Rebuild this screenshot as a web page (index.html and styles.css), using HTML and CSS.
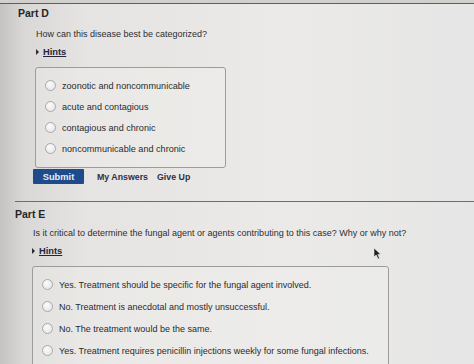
FILE: index.html
```html
<!DOCTYPE html>
<html>
<head>
<meta charset="utf-8">
<link rel="stylesheet" href="styles.css">
</head>
<body>
<div class="page">
  <div class="topline"></div>
  <section class="part part-d">
    <h2 class="part-title">Part D</h2>
    <p class="question">How can this disease best be categorized?</p>
    <div class="hints"><span class="tri"></span><a class="hints-link">Hints</a></div>
    <div class="choices">
      <label class="choice"><span class="radio"></span>zoonotic and noncommunicable</label>
      <label class="choice"><span class="radio"></span>acute and contagious</label>
      <label class="choice"><span class="radio"></span>contagious and chronic</label>
      <label class="choice"><span class="radio"></span>noncommunicable and chronic</label>
    </div>
    <div class="actions">
      <button class="submit">Submit</button>
      <a class="action-link">My Answers</a>
      <a class="action-link">Give Up</a>
    </div>
  </section>
  <section class="part part-e">
    <h2 class="part-title">Part E</h2>
    <p class="question">Is it critical to determine the fungal agent or agents contributing to this case? Why or why not?</p>
    <div class="hints"><span class="tri"></span><a class="hints-link">Hints</a></div>
    <div class="choices">
      <label class="choice"><span class="radio"></span>Yes. Treatment should be specific for the fungal agent involved.</label>
      <label class="choice"><span class="radio"></span>No. Treatment is anecdotal and mostly unsuccessful.</label>
      <label class="choice"><span class="radio"></span>No. The treatment would be the same.</label>
      <label class="choice"><span class="radio"></span>Yes. Treatment requires penicillin injections weekly for some fungal infections.</label>
    </div>
  </section>
  <svg class="cursor" width="9" height="13" viewBox="0 0 9 13"><path d="M1 1 L1 10 L3.2 8 L5 12 L6.5 11.3 L4.8 7.5 L7.8 7.5 Z" fill="#222" stroke="#eee" stroke-width="0.6"/></svg>
</div>
</body>
</html>
```
FILE: styles.css
```css
html, body {
  margin: 0;
  padding: 0;
}
body {
  width: 474px;
  height: 364px;
  overflow: hidden;
  font-family: "Liberation Sans", Arial, sans-serif;
  color: #2e2e30;
  background: linear-gradient(90deg, #c4c3c1 0%, #d9d8d6 5%, #e6e4e2 18%, #ebeae8 60%, #e6e6e6 100%);
}
.page {
  position: relative;
  height: 364px;
}
.topline {
  height: 3px;
  background: #d2d0cd;
  border-bottom: 1px solid #5f5f60;
}
.part-title {
  margin: 0;
  font-size: 10.5px;
  line-height: 12px;
  font-weight: bold;
  color: #262628;
}
.question {
  margin: 0;
  font-size: 9px;
}
.hints {
  display: flex;
  align-items: center;
  gap: 4px;
  font-size: 9.3px;
  font-weight: bold;
}
.tri {
  width: 0;
  height: 0;
  border-top: 3px solid transparent;
  border-bottom: 3px solid transparent;
  border-left: 3.5px solid #2c2c30;
}
.hints-link {
  color: #23263a;
  text-decoration: underline;
}
.choices {
  border: 1px solid #9c9c9e;
  border-radius: 3px;
  display: flex;
  flex-direction: column;
  background: rgba(240, 240, 238, 0.35);
  box-sizing: border-box;
  padding-left: 9px;
}
.choice {
  display: flex;
  align-items: center;
  font-size: 9.1px;
  color: #2a2a2c;
}
.radio {
  width: 9px;
  height: 9px;
  border-radius: 50%;
  border: 1px solid #a9a9ab;
  background: radial-gradient(circle at 40% 35%, #fbfbfb, #e2e2e2);
  flex: none;
  margin-right: 6px;
}

/* Part D */
.part-d {
  padding: 3px 0 0 18px;
}
.part-d .question {
  margin: 10px 0 0 18px;
}
.part-d .hints {
  margin: 8px 0 0 18px;
}
.part-d .choices {
  margin: 10px 0 0 17px;
  width: 191px;
  height: 101px;
  padding-top: 12px;
  gap: 10px;
}
.actions {
  display: flex;
  align-items: center;
  margin: 1px 0 0 15px;
}
.submit {
  font-family: inherit;
  font-size: 9.3px;
  font-weight: bold;
  color: #e8eef8;
  background: #1d4b8b;
  border: none;
  border-radius: 1px;
  width: 51px;
  height: 15px;
  padding: 0;
}
.action-link {
  font-size: 8.8px;
  font-weight: bold;
  color: #2e3144;
  margin-left: 13px;
}
.action-link + .action-link {
  margin-left: 9px;
}

/* Part E */
.part-e {
  margin: 17px 0 0 15px;
  border-top: 1px solid #6d6d6f;
  padding-top: 6px;
}
.part-e .question {
  margin: 8px 0 0 18px;
}
.part-e .hints {
  margin: 8px 0 0 17px;
}
.part-e .choices {
  margin: 10px 0 0 17px;
  width: 357px;
  height: 110px;
  padding-top: 12px;
  gap: 11px;
}
.part-e .choice {
  font-size: 9px;
}
.cursor {
  position: absolute;
  left: 373px;
  top: 247px;
}
```
